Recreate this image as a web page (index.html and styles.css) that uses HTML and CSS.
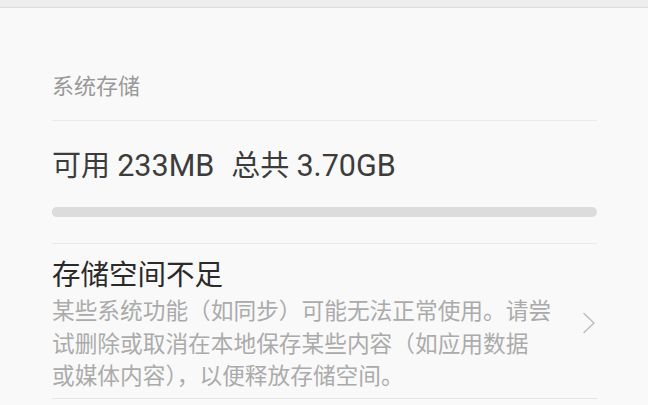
FILE: index.html
```html
<!DOCTYPE html>
<html lang="zh-CN">
<head>
<meta charset="utf-8">
<title>系统存储</title>
<link rel="stylesheet" href="styles.css">
</head>
<body>
<div class="topbar"></div>
<main class="content">
  <div class="section-header">系统存储</div>
  <div class="usage">
    <div class="usage-text"><span>可用 <span class="num">233MB</span></span><span class="total">总共 <span class="num">3.70GB</span></span></div>
    <div class="bar"><div class="bar-fill" style="width: 6.2%"></div></div>
  </div>
  <div class="item">
    <div class="item-body">
      <div class="item-title">存储空间不足</div>
      <div class="item-desc">某些系统功能（如同步）可能无法正常使用。请尝<br>试删除或取消在本地保存某些内容（如应用数据<br>或媒体内容），以便释放存储空间。</div>
    </div>
    <svg class="chevron" width="14" height="22" viewBox="0 0 14 22"><path d="M2 1.5 L12 11 L2 20.5" fill="none" stroke="#bdbdbd" stroke-width="1.5" stroke-linecap="round" stroke-linejoin="round"/></svg>
  </div>
</main>
</body>
</html>
```
FILE: styles.css
```css
html, body {
  margin: 0;
  padding: 0;
  background: #f9f9f9;
  font-family: Roboto, "Noto Sans CJK SC", sans-serif;
}
.topbar {
  height: 7px;
  background: #ededed;
  border-bottom: 1px solid #dcdcdc;
}
.content {
  padding: 0 51px 0 52px;
}
.section-header {
  padding-top: 64px;
  padding-bottom: 18px;
  line-height: 30px;
  font-size: 22px;
  color: #9a9a9a;
  border-bottom: 1px solid #ebebeb;
}
.usage {
  padding-top: 30px;
  padding-bottom: 26px;
  border-bottom: 1px solid #ebebeb;
}
.usage-text {
  font-size: 29px;
  line-height: 30px;
  color: #3c3c3c;
}
.num {
  font-size: 30.5px;
}
.total {
  margin-left: 17px;
}
.bar {
  margin-top: 26px;
  height: 10px;
  border-radius: 5px;
  background: #dcdcdc;
  overflow: hidden;
}
.bar-fill {
  height: 100%;
  background: #dcdcdc;
}
.item {
  display: flex;
  align-items: center;
  padding: 16px 0 4px;
  border-bottom: 1px solid #e6e6e6;
}
.item-body {
  flex: 1;
}
.item-title {
  font-size: 28.5px;
  line-height: 32px;
  color: #2a2a2a;
  margin-bottom: 4px;
}
.item-desc {
  font-size: 22.7px;
  line-height: 32.5px;
  color: #ababab;
}
.chevron {
  flex: none;
  margin-right: 1px;
  margin-bottom: 8px;
}
```
